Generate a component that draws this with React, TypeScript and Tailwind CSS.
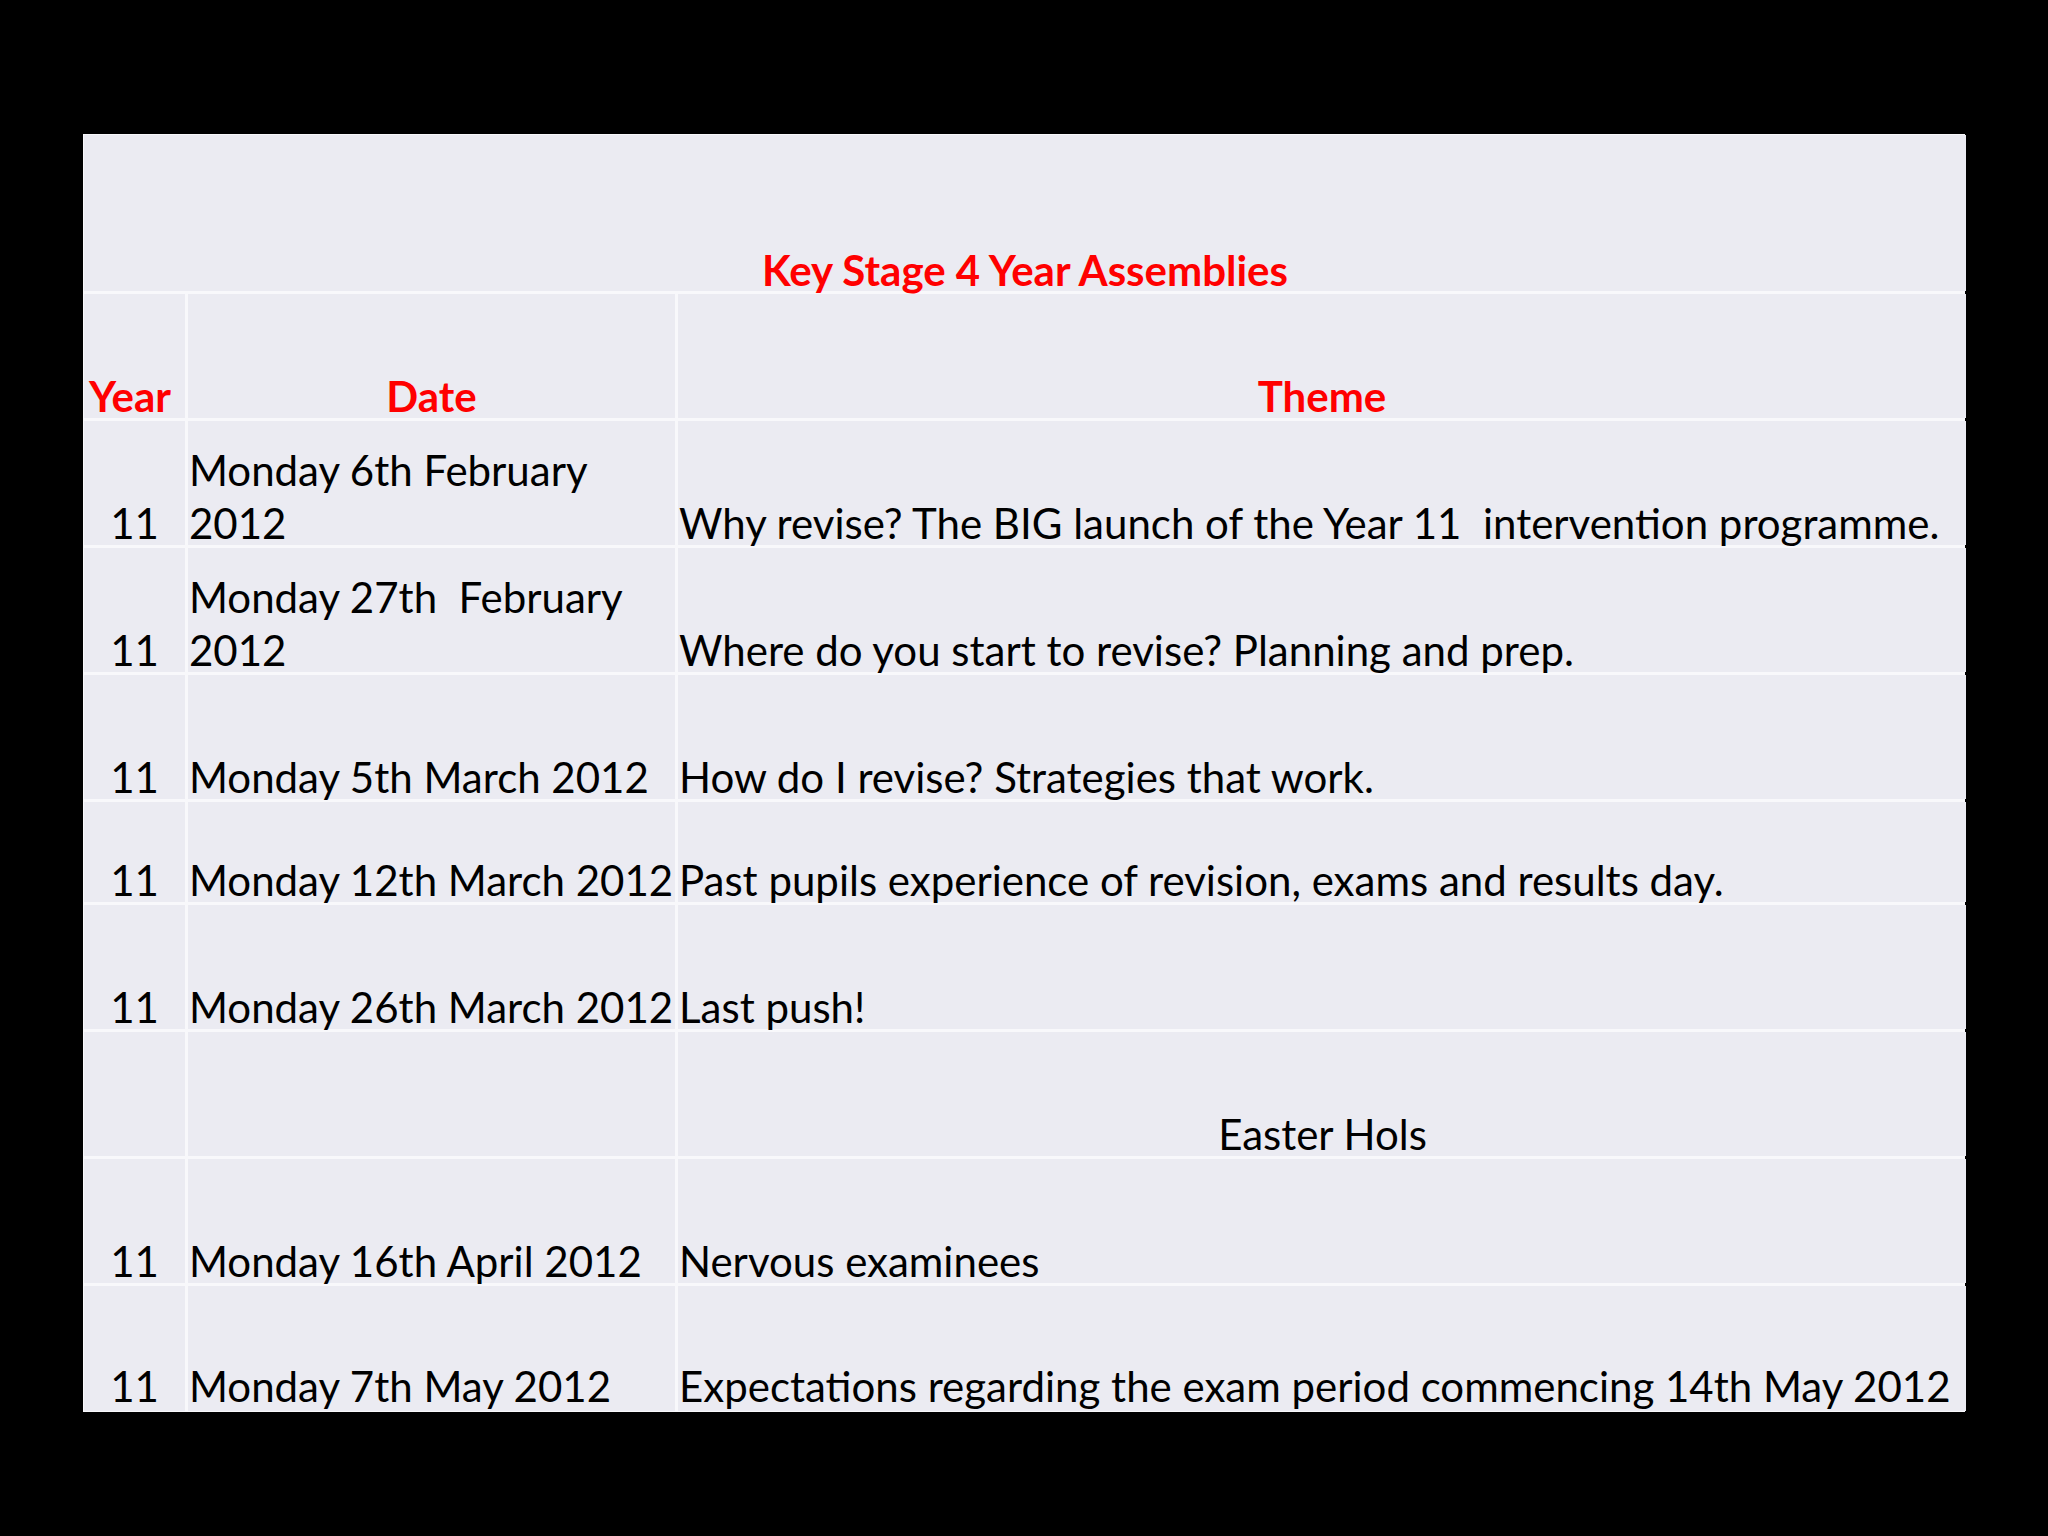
import React from "react";

type Row = { year: string; date: React.ReactNode; theme: string; h: number; center?: boolean; mb?: string };

const rows: Row[] = [
  { year: "11", date: <>Monday 6th February<br />2012</>, theme: "Why revise? The BIG launch of the Year 11\u00a0 intervention programme.", h: 124 },
  { year: "11", date: <>Monday 27th&nbsp; February<br />2012</>, theme: "Where do you start to revise? Planning and prep.", h: 124 },
  { year: "11", date: "Monday 5th March 2012", theme: "How do I revise? Strategies that work.", h: 124 },
  { year: "11", date: "Monday 12th March 2012", theme: "Past pupils experience of revision, exams and results day.", h: 100 },
  { year: "11", date: "Monday 26th March 2012", theme: "Last push!", h: 124 },
  { year: "", date: "", theme: "Easter Hols", h: 124, center: true },
  { year: "11", date: "Monday 16th April 2012", theme: "Nervous examinees", h: 124 },
  { year: "11", date: "Monday 7th May 2012", theme: "Expectations regarding the exam period commencing 14th May 2012", h: 125, mb: "-mb-[2px]" },
];

export default function App() {
  return (
    <div className="w-[2048px] h-[1536px] bg-black pt-[134px] pl-[83px]" style={{ fontFamily: "Lato, 'Open Sans', sans-serif" }}>
      <div className="w-[1882px] bg-[#f8f8fb] p-[1px] grid grid-cols-[101px_487px_1288px] gap-[3px] text-[42px] leading-[53px] text-black">
        <div className="col-span-3 h-[156px] bg-[#ebebf2] flex items-end justify-center">
          <span className="font-bold text-[#ff0000] -mb-[6px]">Key Stage 4 Year Assemblies</span>
        </div>
        <div className="h-[124px] bg-[#ebebf2] flex items-end pl-[5px] font-bold text-[#ff0000]"><span className="-mb-[5px]">Year</span></div>
        <div className="h-[124px] bg-[#ebebf2] flex items-end justify-center font-bold text-[#ff0000]"><span className="-mb-[5px]">Date</span></div>
        <div className="h-[124px] bg-[#ebebf2] flex items-end justify-center font-bold text-[#ff0000]"><span className="-mb-[5px]">Theme</span></div>
        {rows.map((r, i) => {
          const mb = r.mb ?? "-mb-[5px]";
          return (
            <React.Fragment key={i}>
              <div className="bg-[#ebebf2] flex items-end justify-center" style={{ height: r.h }}>
                <span className={mb}>{r.year}</span>
              </div>
              <div className="bg-[#ebebf2] flex items-end pl-[1px] whitespace-nowrap" style={{ height: r.h }}>
                <div className={mb}>{r.date}</div>
              </div>
              <div className={"bg-[#ebebf2] flex items-end pl-[1px] whitespace-nowrap " + (r.center ? "justify-center" : "")} style={{ height: r.h }}>
                <span className={mb}>{r.theme}</span>
              </div>
            </React.Fragment>
          );
        })}
      </div>
    </div>
  );
}
